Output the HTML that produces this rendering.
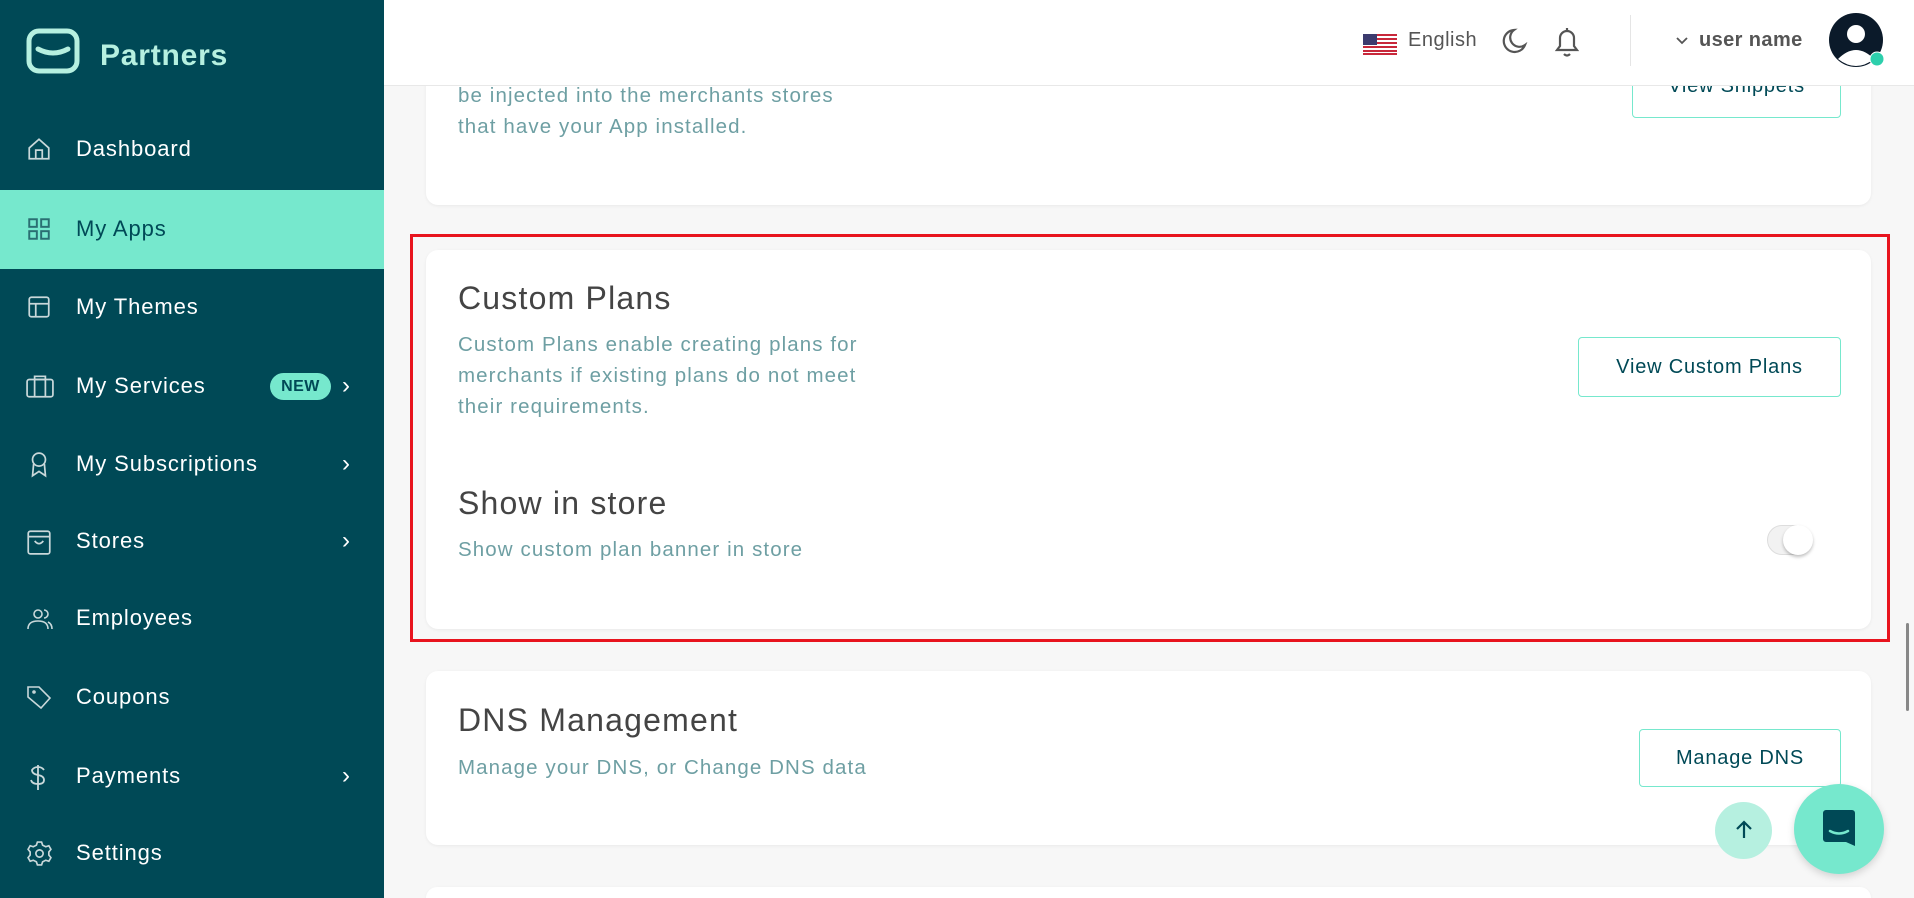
<!DOCTYPE html>
<html style="overflow:hidden;height:898px"><head><meta charset="utf-8"><style>
*{margin:0;padding:0;box-sizing:border-box}
body{width:1914px;height:898px;overflow:hidden;background:#f7f7f7;font-family:"Liberation Sans",sans-serif;position:relative}
.a{position:absolute}
#sb{left:0;top:0;width:384px;height:898px;background:#004956}
.mi{position:absolute;left:0;width:384px;height:40px;color:#fff;font-size:22px;line-height:40px;letter-spacing:0.9px}
.mi .t{position:absolute;left:76px;top:0}
.mi svg{position:absolute;left:26px;top:7px}
.chev{position:absolute;left:342px;top:0;font-size:24px}
.card{position:absolute;left:426px;width:1445px;background:#fff;border-radius:12px;box-shadow:0 1px 3px rgba(0,0,0,.06)}
.h{position:absolute;left:458px;color:#444;font-size:32px;line-height:40px;letter-spacing:1.2px}
.d{position:absolute;left:458px;color:#6e9fa3;font-size:20.5px;line-height:31px;letter-spacing:1.1px}
.btn{position:absolute;border:1px solid #76e8cd;border-radius:4px;background:#fff;color:#004956;font-size:20px;text-align:center;letter-spacing:0.8px}
</style></head><body>
<div id="sb" class="a">
<svg class="a" style="left:26px;top:28px" width="54" height="46" viewBox="0 0 54 46"><rect x="3" y="3" width="48" height="40" rx="10" fill="none" stroke="#b6f0e0" stroke-width="5"/><path d="M12 21 Q27 29 42 21" fill="none" stroke="#b6f0e0" stroke-width="5" stroke-linecap="round"/></svg>
<div class="a" style="left:100px;top:36px;color:#b6f0e0;font-size:30px;font-weight:bold;line-height:40px;letter-spacing:0.8px">Partners</div>
<div class="mi" style="top:129px"><svg width="26" height="26" viewBox="0 0 24 24" fill="none" stroke="#c9d8da" stroke-width="1.6"><path d="M3 11L12 3l9 8v10H3z M9 21v-8h6v8"/></svg><span class="t">Dashboard</span></div>
<div class="a" style="left:0;top:190px;width:384px;height:79px;background:#76e8cd"></div>
<div class="mi" style="top:209px;color:#004956"><svg width="26" height="26" viewBox="0 0 24 24" fill="none" stroke="#2a6e72" stroke-width="1.8"><rect x="3" y="3" width="7" height="7"/><rect x="14" y="3" width="7" height="7"/><rect x="3" y="14" width="7" height="7"/><rect x="14" y="14" width="7" height="7"/></svg><span class="t">My Apps</span></div>
<div class="mi" style="top:287px"><svg width="26" height="26" viewBox="0 0 24 24" fill="none" stroke="#c9d8da" stroke-width="1.6"><rect x="3" y="3" width="18" height="18" rx="2"/><path d="M3 9h18M9 9v12"/></svg><span class="t">My Themes</span></div>
<div class="mi" style="top:366px"><svg width="28" height="26" viewBox="0 0 26 24" fill="none" stroke="#c9d8da" stroke-width="1.6"><rect x="1" y="6" width="24" height="16" rx="2"/><path d="M8 22V3h10v19M8 6h10"/></svg><span class="t">My Services</span><span class="a" style="left:270px;top:7px;width:61px;height:27px;border-radius:14px;background:#76e8cd;color:#004956;font-size:16px;font-weight:bold;line-height:27px;text-align:center;letter-spacing:0.5px">NEW</span><span class="chev">›</span></div>
<div class="mi" style="top:444px"><svg width="26" height="28" viewBox="0 0 24 26" fill="none" stroke="#c9d8da" stroke-width="1.6"><circle cx="12" cy="8" r="6"/><path d="M7 12l-1 11 6-4 6 4-1-11"/></svg><span class="t">My Subscriptions</span><span class="chev">›</span></div>
<div class="mi" style="top:521px"><svg width="26" height="28" viewBox="0 0 24 26" fill="none" stroke="#c9d8da" stroke-width="1.6"><rect x="2" y="3" width="20" height="21" rx="2"/><path d="M2 8h20M8 12q4 5 8 0"/></svg><span class="t">Stores</span><span class="chev">›</span></div>
<div class="mi" style="top:598px"><svg width="28" height="26" viewBox="0 0 28 26" fill="none" stroke="#c9d8da" stroke-width="1.6"><circle cx="12" cy="9" r="4"/><path d="M2 24q0-8 10-8t10 8M18 5a4 4 0 010 8M22 17q4 2 4 7"/></svg><span class="t">Employees</span></div>
<div class="mi" style="top:677px"><svg width="26" height="26" viewBox="0 0 26 26" fill="none" stroke="#c9d8da" stroke-width="1.6"><path d="M2 3h11l11 11-9 10L2 13z"/><circle cx="8" cy="8" r="1"/></svg><span class="t">Coupons</span></div>
<div class="mi" style="top:756px"><svg width="24" height="28" viewBox="0 0 24 28" fill="none" stroke="#c9d8da" stroke-width="1.8"><path d="M12 2v25M18 7q-2-3-6-3t-6 3q0 4 6 5t6 5q0 4-6 4t-7-4"/></svg><span class="t">Payments</span><span class="chev">›</span></div>
<div class="mi" style="top:833px"><svg width="27" height="27" viewBox="0 0 26 26" fill="none" stroke="#c9d8da" stroke-width="1.6"><circle cx="13" cy="13" r="3.5"/><path d="M11 2h4l1 3 3 1.5 3-1 2 3.5-2 2.5v3l2 2.5-2 3.5-3-1-3 1.5-1 3h-4l-1-3-3-1.5-3 1-2-3.5 2-2.5v-3l-2-2.5 2-3.5 3 1 3-1.5z"/></svg><span class="t">Settings</span></div>
</div>

<div class="card" style="top:60px;height:145px"></div>
<div class="d" style="top:80px">be injected into the merchants stores<br>that have your App installed.</div>
<div class="btn" style="left:1632px;top:60px;width:209px;height:58px;line-height:50px">View Snippets</div>

<div class="a" style="left:410px;top:234px;width:1480px;height:408px;border:3px solid #e8141e"></div>
<div class="card" style="top:250px;height:379px"></div>
<div class="h" style="top:278px">Custom Plans</div>
<div class="d" style="top:329px">Custom Plans enable creating plans for<br>merchants if existing plans do not meet<br>their requirements.</div>
<div class="btn" style="left:1578px;top:337px;width:263px;height:60px;line-height:58px">View Custom Plans</div>
<div class="h" style="top:483px">Show in store</div>
<div class="d" style="top:534px">Show custom plan banner in store</div>
<div class="a" style="left:1767px;top:525px;width:45px;height:30px;border-radius:15px;background:#f2f2f2;border:1px solid #ddd"></div>
<div class="a" style="left:1783px;top:525px;width:30px;height:30px;border-radius:50%;background:#fff;box-shadow:0 2px 3px rgba(0,0,0,.25)"></div>

<div class="card" style="top:671px;height:174px"></div>
<div class="h" style="top:700px">DNS Management</div>
<div class="d" style="top:752px">Manage your DNS, or Change DNS data</div>
<div class="btn" style="left:1639px;top:729px;width:202px;height:58px;line-height:56px">Manage DNS</div>
<div class="card" style="top:887px;height:11px;border-radius:12px 12px 0 0"></div>

<div class="a" style="left:384px;top:0;width:1530px;height:86px;background:#fff;border-bottom:1px solid #e8e8e8"></div>
<svg class="a" style="left:1363px;top:34px" width="34" height="21" viewBox="0 0 34 21"><rect width="34" height="21" fill="#fff"/><g fill="#c8283a"><rect y="0" width="34" height="2"/><rect y="4" width="34" height="2"/><rect y="8" width="34" height="2"/><rect y="12" width="34" height="2"/><rect y="16" width="34" height="2"/><rect y="19" width="34" height="2"/></g><rect width="14" height="11" fill="#3c3b6e"/></svg>
<div class="a" style="left:1408px;top:27px;font-size:20px;color:#555;line-height:26px;letter-spacing:0.5px">English</div>
<svg class="a" style="left:1500px;top:27px" width="28" height="30" viewBox="0 0 28 30" fill="none" stroke="#555" stroke-width="2.2"><path d="M14 3a11 11 0 1 0 11 15A9 9 0 0 1 14 3z"/></svg>
<svg class="a" style="left:1553px;top:26px" width="28" height="32" viewBox="0 0 28 32" fill="none" stroke="#555" stroke-width="2.2"><path d="M4 24h20l-3-4V12a7 7 0 0 0-14 0v8zM11 28q3 3 6 0M14 2v3"/></svg>
<div class="a" style="left:1630px;top:15px;width:1px;height:51px;background:#e5e5e5"></div>
<svg class="a" style="left:1675px;top:36px" width="14" height="10" viewBox="0 0 14 10" fill="none" stroke="#555" stroke-width="1.8"><path d="M2 2l5 5 5-5"/></svg>
<div class="a" style="left:1699px;top:27px;font-size:20px;color:#555;font-weight:bold;line-height:26px;letter-spacing:0.4px">user name</div>
<svg class="a" style="left:1829px;top:13px" width="56" height="56" viewBox="0 0 56 56"><circle cx="27" cy="27" r="27" fill="#0b1a2a"/><circle cx="27" cy="21" r="9" fill="#fff"/><path d="M9 46q18-18 36 0q-18 14-36 0z" fill="#fff"/><circle cx="48" cy="46" r="7" fill="#2dcfac" stroke="#fff" stroke-width="1"/></svg>

<div class="a" style="left:1906px;top:623px;width:3px;height:88px;background:#888;border-radius:2px"></div>
<div class="a" style="left:1715px;top:802px;width:57px;height:57px;border-radius:50%;background:#b6f0e0"></div>
<svg class="a" style="left:1733px;top:819px" width="22" height="22" viewBox="0 0 22 22" fill="none" stroke="#004956" stroke-width="2.2"><path d="M11 19V4M4 10l7-7 7 7"/></svg>
<div class="a" style="left:1794px;top:784px;width:90px;height:90px;border-radius:50%;background:#76e8cd;box-shadow:0 3px 8px rgba(0,0,0,.15)"></div>
<svg class="a" style="left:1822px;top:809px" width="34" height="40" viewBox="0 0 34 40"><path d="M4 1h26a3 3 0 0 1 3 3v33l-9-4H4a3 3 0 0 1-3-3V4a3 3 0 0 1 3-3z" fill="#004956"/><path d="M8 22q9 5 18 0" fill="none" stroke="#76e8cd" stroke-width="2.5" stroke-linecap="round"/></svg>
</body></html>
